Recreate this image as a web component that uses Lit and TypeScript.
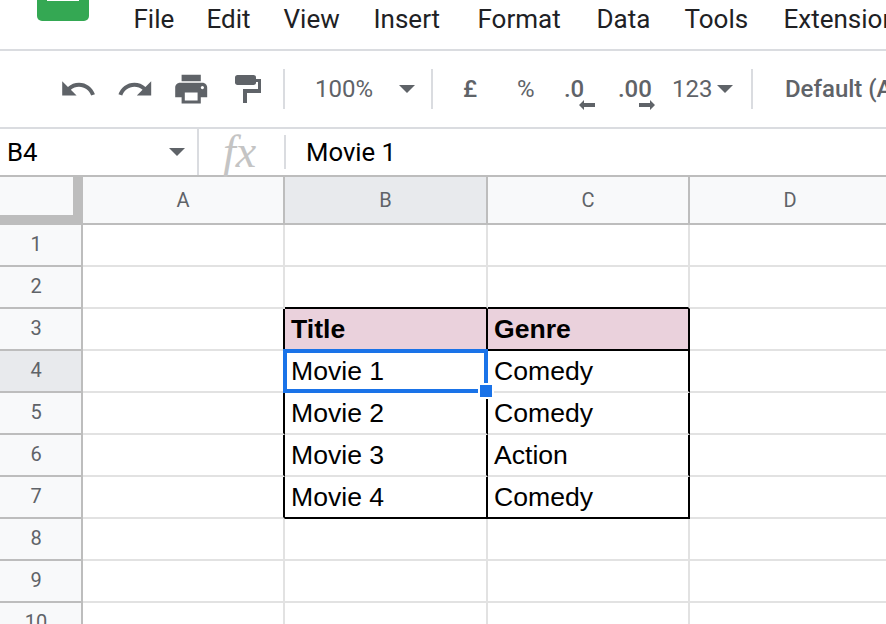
import { LitElement, html, css } from "lit";
import { customElement } from "lit/decorators.js";

const ROWS: Record<number, [string, string]> = {
  3: ["Title", "Genre"],
  4: ["Movie 1", "Comedy"],
  5: ["Movie 2", "Comedy"],
  6: ["Movie 3", "Action"],
  7: ["Movie 4", "Comedy"],
};
const MENUS: [string, number][] = [
  ["File", 73], ["Edit", 77], ["View", 90], ["Insert", 104],
  ["Format", 119], ["Data", 88], ["Tools", 99], ["Extensions", 160],
];

@customElement("app-root")
export class AppRoot extends LitElement {
  static styles = css`
    :host { display: block; width: 886px; height: 624px; overflow: hidden; background: #fff; position: relative; font-family: Roboto, sans-serif; }
    .menu { height: 49px; border-bottom: 2px solid #dadce0; display: flex; position: relative; padding-left: 133.500px; overflow: hidden; }
    .logo { position: absolute; left: 37px; top: -20px; width: 52px; height: 41px; background: #34a853; border-radius: 5px; }
    .logo i { position: absolute; left: 10px; top: 14px; width: 32px; height: 7px; background: #fff; }
    .menu span { flex: none; font-size: 26px; line-height: 38px; color: #202124; }
    .toolbar { height: 76px; border-bottom: 2px solid #dadce0; display: flex; align-items: center; }
    .toolbar > * { flex: none; }
    .ic { fill: #5f6368; display: block; }
    .sep { width: 2px; height: 40px; background: #dadce0; }
    .tt { color: #5f6368; font-size: 24px; line-height: 40px; }
    .med { font-weight: 500; }
    .stack { position: relative; height: 40px; }
    .tiny { position: absolute; }
    .caret { width: 0; height: 0; border-left: 8px solid transparent; border-right: 8px solid transparent; border-top: 8px solid #5f6368; }
    .formula { height: 46px; border-bottom: 2px solid #bdbdbd; display: flex; align-items: center; }
    .formula > * { flex: none; }
    .nm { width: 162px; padding-left: 7px; font-size: 25.7px; color: #000; }
    .fsep { width: 2px; background: #dadce0; }
    .fx { font-family: "Liberation Serif", serif; font-style: italic; font-size: 46px; color: #c4c4c4; width: 85px; padding-left: 24px; box-sizing: border-box; line-height: 40px; }
    .val { font-size: 25.7px; color: #000; margin-left: 20px; }
    .grid { display: grid; grid-template-columns: 83px 202px 203px 202px 202px; grid-template-rows: 48px repeat(10, 42px); position: relative; }
    .c { box-sizing: border-box; border-right: 2px solid #e2e2e2; border-bottom: 2px solid #e2e2e2; font-family: "Liberation Sans", Arial, sans-serif; font-size: 26.6px; color: #000; padding-left: 6px; line-height: 41px; white-space: nowrap; overflow: hidden; }
    .br { border-right-color: #000; }
    .bb { border-bottom-color: #000; }
    .hd { font-weight: 700; background: #ead1dc; }
    .corner { box-sizing: border-box; background: #f8f9fa; border-right: 10px solid #bdbdbd; border-bottom: 10px solid #bdbdbd; }
    .h { box-sizing: border-box; background: #f8f9fa; border-right: 2px solid #bdbdbd; border-bottom: 2px solid #bdbdbd; color: #5f6368; font-size: 20px; display: flex; align-items: center; justify-content: center; }
    .rh { padding: 0 9px 2px 0; }
    .sel { background: #e8eaed; }
    .selbox { position: absolute; left: 283px; top: 172px; width: 205px; height: 44px; box-sizing: border-box; border: 4px solid #1a73e8; }
    .handle { position: absolute; left: 191px; top: 30px; width: 16px; height: 16px; box-sizing: border-box; background: #1a73e8; border: 2px solid #fff; }
  `;

  render() {
    const cols = ["A", "B", "C", "D"];
    const rows = Array.from({ length: 10 }, (_, i) => i + 1);
    return html`
      <div class="menu">
        <div class="logo"><i></i></div>
        ${MENUS.map(([m, w]) => html`<span style="width:${w}px">${m}</span>`)}
      </div>
      <div class="toolbar">
        <svg class="ic" style="margin-left:58.800px" width="38.400" height="38.400" viewBox="0 0 24 24"><path d="M12.5 8c-2.65 0-5.05.99-6.9 2.6L2 7v9h9l-3.62-3.62c1.39-1.16 3.16-1.88 5.12-1.88 3.54 0 6.55 2.31 7.6 5.5l2.37-.78C21.08 11.03 17.15 8 12.5 8z"/></svg>
        <svg class="ic" style="margin-left:19.300px" width="38.400" height="38.400" viewBox="0 0 24 24"><path d="M18.4 10.6C16.55 8.99 14.15 8 11.5 8c-4.65 0-8.58 3.03-9.96 7.22L3.9 16c1.05-3.19 4.05-5.5 7.6-5.5 1.95 0 3.73.72 5.12 1.88L13 16h9V7l-3.6 3.6z"/></svg>
        <svg class="ic" style="margin-left:16.900px" width="38.400" height="38.400" viewBox="0 0 24 24"><path d="M19 8H5c-1.66 0-3 1.34-3 3v6h4v4h12v-4h4v-6c0-1.66-1.34-3-3-3zm-3 11H8v-5h8v5zm3-7c-.55 0-1-.45-1-1s.45-1 1-1 1 .45 1 1-.45 1-1 1zm-1-9H6v4h12V3z"/></svg>
        <svg class="ic" style="margin-left:24.800px" width="26" height="28" viewBox="0 0 26 28"><path d="M2.500 0h16C20 0 21 1 21 2.500v5C21 9 20 10 18.500 10h-16C1 10 0 9 0 7.500v-5C0 1 1 0 2.500 0z"/><path d="M21 4h5v14H12v10H8V14h15V7h-2z"/></svg>
        <div class="sep" style="margin-left:22px"></div>
        <div class="tt" style="margin-left:30px;width:84px">100%</div>
        <div class="caret"></div>
        <div class="sep" style="margin-left:16px"></div>
        <div class="tt med" style="margin-left:30px;width:54px">£</div>
        <div class="tt" style="width:47px">%</div>
        <div class="stack" style="width:54px">
          <span class="tt med">.0</span>
          <svg class="ic tiny" style="left:15px;top:31px" width="16" height="10" viewBox="0 0 16 10"><path d="M5 0v3h11v4H5v3L0 5z"/></svg>
        </div>
        <div class="stack" style="width:54px">
          <span class="tt med">.00</span>
          <svg class="ic tiny" style="left:21px;top:31px" width="16" height="10" viewBox="0 0 16 10"><path d="M11 0v3H0v4h11v3l5-5z"/></svg>
        </div>
        <div class="tt" style="width:45px">123</div>
        <div class="caret"></div>
        <div class="sep" style="margin-left:18px"></div>
        <div class="tt med" style="margin-left:32px;white-space:nowrap">Default (Arial)</div>
      </div>
      <div class="formula">
        <div class="nm">B4</div>
        <div class="caret"></div>
        <div class="fsep" style="height:46px;margin-left:12px"></div>
        <div class="fx">fx</div>
        <div class="fsep" style="height:34px"></div>
        <div class="val">Movie 1</div>
      </div>
      <div class="grid">
        <div class="corner"></div>
        ${cols.map((c) => html`<div class="h ${c === "B" ? "sel" : ""}">${c}</div>`)}
        ${rows.map((r) => {
          const inT = r >= 3 && r <= 7;
          const d = ROWS[r];
          const edge = r === 2 || r === 3 || r === 7 ? "bb" : "";
          const cls = `${inT ? "br" : ""} ${edge} ${r === 3 ? "hd" : ""}`;
          return html`
            <div class="h rh ${r === 4 ? "sel" : ""}">${r}</div>
            <div class="c ${inT ? "br" : ""}"></div>
            <div class="c ${cls}">${d ? d[0] : ""}</div>
            <div class="c ${cls}">${d ? d[1] : ""}</div>
            <div class="c"></div>
          `;
        })}
        <div class="selbox"><div class="handle"></div></div>
      </div>
    `;
  }
}
